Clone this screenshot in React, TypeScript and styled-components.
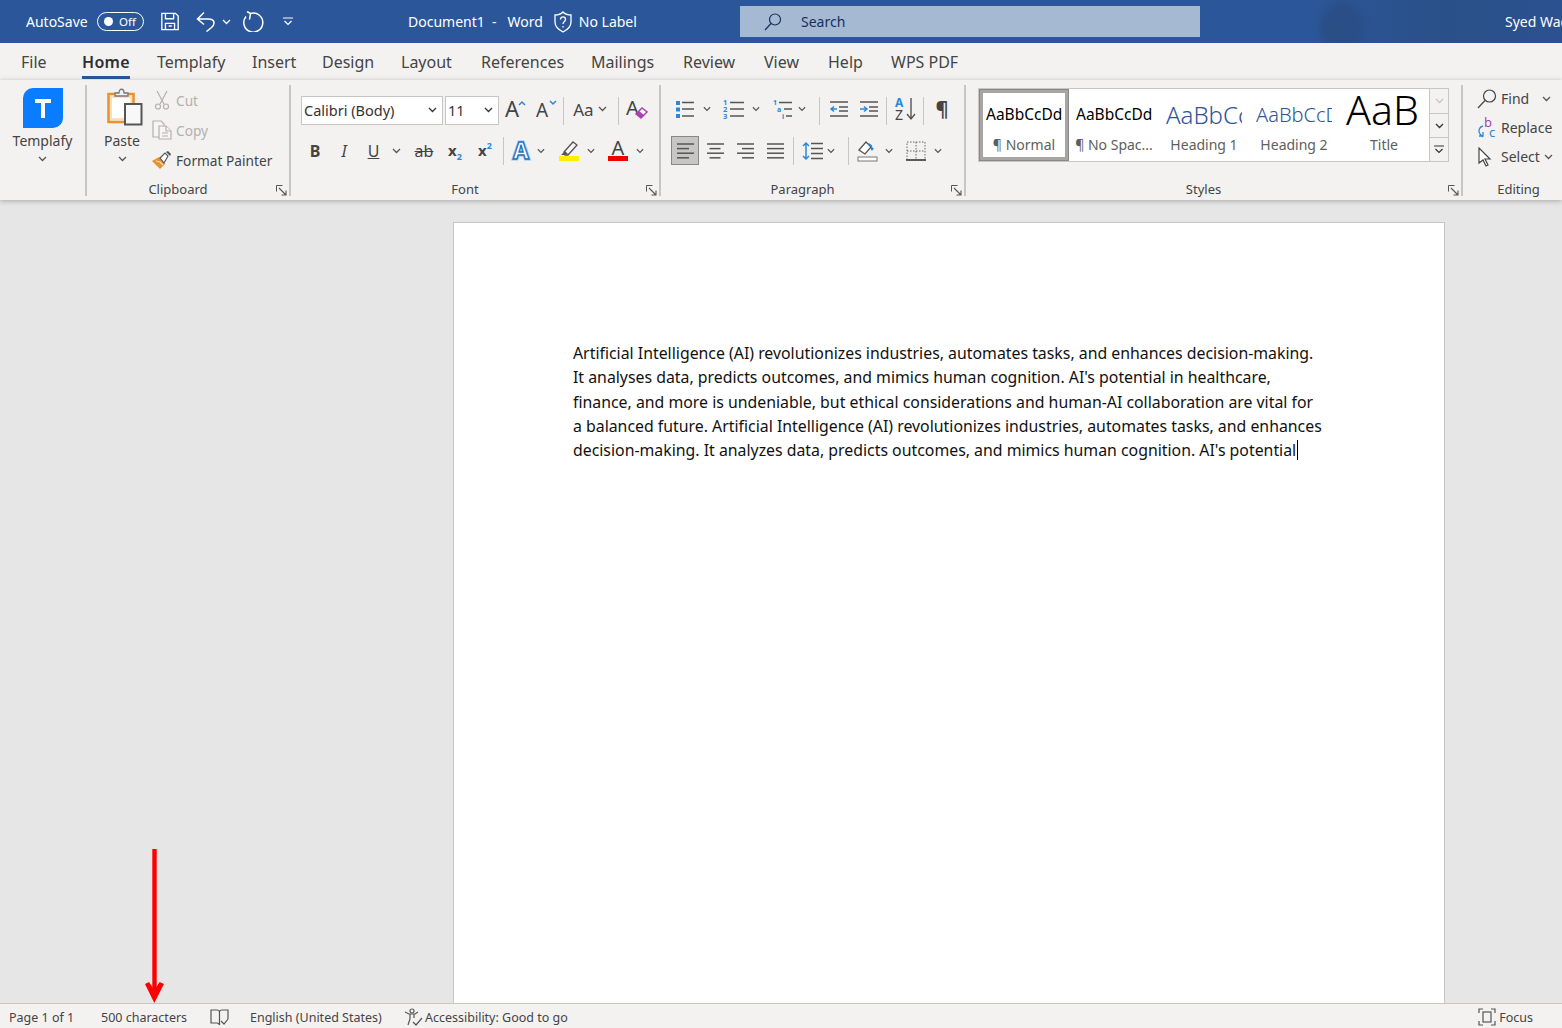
import React from "react";
import styled, { createGlobalStyle } from "styled-components";

const UI = `"Noto Sans", "Open Sans", sans-serif`;

const GlobalStyle = createGlobalStyle`
    html, body {
        margin: 0;
        padding: 0;
        height: 100%;
        overflow: hidden;
    }
    body {
        font-family: ${UI};
        background: #e6e6e6;
    }
`;

const Window = styled.div`
    position: relative;
    width: 1562px;
    height: 1028px;
    display: flex;
    flex-direction: column;
    overflow: hidden;
`;

/* title bar */
const TitleBar = styled.div`
    height: 43px;
    flex: none;
    display: flex;
    align-items: center;
    color: #fff;
    font-size: 14px;
    background: linear-gradient(90deg, #2b579a 0, #2b579a 1300px, #2a5088 1440px, #2b5190 100%);
    overflow: hidden;
    position: relative;
    &::before {
        content: "";
        position: absolute;
        left: 1320px;
        top: 2px;
        width: 44px;
        height: 52px;
        border-radius: 50%;
        background: #2a4f87;
        filter: blur(3px);
    }
`;
const QuickAccess = styled.div`
    width: 408px;
    flex: none;
    display: flex;
    align-items: center;
    padding-left: 26px;
    box-sizing: border-box;
`;
const AutoSave = styled.span`
    width: 71px;
    flex: none;
`;
const Toggle = styled.div`
    width: 47px;
    height: 19px;
    border: 1px solid #fff;
    border-radius: 10px;
    box-sizing: border-box;
    display: flex;
    align-items: center;
    gap: 6px;
    padding-left: 6px;
    font-size: 11.5px;
    flex: none;
    margin-right: 16px;
    &::before {
        content: "";
        width: 9px;
        height: 9px;
        border-radius: 50%;
        background: #fff;
    }
`;
const QuickSlot = styled.div<{ $w: number; $ml?: number }>`
    width: ${(p) => p.$w}px;
    margin-left: ${(p) => p.$ml ?? 0}px;
    flex: none;
    display: flex;
    align-items: center;
    justify-content: center;
`;
const DocTitle = styled.div`
    width: 332px;
    flex: none;
    display: flex;
    align-items: center;
    white-space: pre;
`;
const ShieldSlot = styled.span`
    display: flex;
    margin: 0 6px 0 10px;
`;
const SearchBox = styled.div`
    width: 460px;
    height: 31px;
    flex: none;
    display: flex;
    align-items: center;
    gap: 19px;
    padding-left: 24px;
    box-sizing: border-box;
    background: #a6b9d3;
    color: #16305c;
`;
const UserName = styled.div`
    margin-left: 305px;
    white-space: nowrap;
    flex: none;
`;

/* tabs */
const TabBar = styled.div`
    height: 37px;
    flex: none;
    display: flex;
    background: #f3f2f1;
    padding-left: 21px;
`;
const TabSlot = styled.div<{ $w: number }>`
    width: ${(p) => p.$w}px;
    flex: none;
`;
const Tab = styled.div<{ $active?: boolean }>`
    display: inline-block;
    height: 36px;
    box-sizing: border-box;
    padding-top: 8px;
    font-size: 16px;
    line-height: 22px;
    color: ${(p) => (p.$active ? "#2f2f2f" : "#444")};
    font-weight: ${(p) => (p.$active ? 600 : 400)};
    letter-spacing: ${(p) => (p.$active ? "0.3px" : "0")};
    border-bottom: 3px solid ${(p) => (p.$active ? "#2b579a" : "transparent")};
    white-space: nowrap;
`;

/* ribbon */
const Ribbon = styled.div`
    height: 120px;
    flex: none;
    display: flex;
    background: #f3f2f1;
    box-shadow: 0 1px 5px rgba(0, 0, 0, 0.28);
    position: relative;
    z-index: 2;
`;
const Group = styled.div<{ $w: number; $last?: boolean }>`
    width: ${(p) => p.$w}px;
    flex: none;
    height: 111px;
    margin-top: 5px;
    box-sizing: border-box;
    position: relative;
    display: flex;
    flex-direction: column;
    border-right: ${(p) => (p.$last ? "none" : "2px solid #c8c6c4")};
`;
const GroupBody = styled.div`
    flex: 1;
    min-height: 0;
    display: flex;
`;
const GroupLabel = styled.div<{ $pr?: number; $pl?: number }>`
    height: 14px;
    line-height: 14px;
    text-align: center;
    font-size: 13px;
    color: #444;
    flex: none;
    padding-right: ${(p) => p.$pr ?? 0}px;
    padding-left: ${(p) => p.$pl ?? 0}px;
`;
const Launcher = styled.span`
    position: absolute;
    right: 2px;
    bottom: 0;
    display: flex;
`;
const BigButton = styled.div<{ $w: number }>`
    width: ${(p) => p.$w}px;
    flex: none;
    display: flex;
    flex-direction: column;
    align-items: center;
    font-size: 14px;
    color: #444;
    padding-top: 3px;
    gap: 2px;
`;
const BigLabel = styled.span`
    line-height: 20px;
    margin-top: 1px;
    margin-bottom: 3px;
`;
const ClipboardList = styled.div`
    display: flex;
    flex-direction: column;
    margin-left: -5px;
`;
const SmallAction = styled.div<{ $off?: boolean }>`
    height: 30px;
    display: flex;
    align-items: center;
    gap: 4px;
    font-size: 13.7px;
    color: ${(p) => (p.$off ? "#b3b0ad" : "#444")};
    white-space: nowrap;
`;
const IconSlot = styled.span`
    width: 20px;
    flex: none;
    display: flex;
    justify-content: center;
`;
const Rows = styled.div`
    display: flex;
    flex-direction: column;
    padding: 11px 0 0 10px;
    gap: 11px;
`;
const Tool = styled.div<{ $w: number; $ml?: number; $on?: boolean }>`
    width: ${(p) => p.$w}px;
    margin-left: ${(p) => p.$ml ?? 0}px;
    height: 29px;
    flex: none;
    display: flex;
    align-items: center;
    justify-content: center;
    box-sizing: border-box;
    background: ${(p) => (p.$on ? "#c8c6c4" : "transparent")};
    border: ${(p) => (p.$on ? "1px solid #8a8886" : "none")};
`;
const ToolRow = styled.div<{ $up?: boolean }>`
    display: flex;
    align-items: center;
    height: 29px;
    ${Tool} {
        margin-bottom: ${(p) => (p.$up ? "3px" : "0")};
    }
`;
const Sep = styled.div<{ $l?: number }>`
    width: 1px;
    height: 28px;
    background: #c8c6c4;
    flex: none;
    margin-left: ${(p) => p.$l ?? 0}px;
`;
const Combo = styled.div<{ $w: number; $mr?: number }>`
    width: ${(p) => p.$w}px;
    margin-right: ${(p) => p.$mr ?? 0}px;
    height: 29px;
    box-sizing: border-box;
    flex: none;
    background: #fff;
    border: 1px solid #c8c6c4;
    display: flex;
    align-items: center;
    justify-content: space-between;
    padding: 0 5px 2px 2px;
    font-size: 14.5px;
    color: #333;
`;

/* styles gallery */
const Gallery = styled.div`
    margin: 3px 0 0 12px;
    width: 471px;
    height: 74px;
    box-sizing: border-box;
    background: #fff;
    border: 1px solid #c8c6c4;
    display: flex;
`;
const StyleCard = styled.div<{ $on?: boolean }>`
    width: 90px;
    height: 72px;
    flex: none;
    box-sizing: border-box;
    border: ${(p) => (p.$on ? "4px solid #a8a6a4" : "4px solid transparent")};
    outline: ${(p) => (p.$on ? "1px solid #8a8886" : "none")};
    outline-offset: -1px;
    display: flex;
    flex-direction: column;
    align-items: center;
    overflow: hidden;
`;
const Sample = styled.div<{ $size: number; $color: string; $light?: boolean; $pb?: number }>`
    height: 42px;
    width: 76px;
    box-sizing: border-box;
    padding-bottom: ${(p) => p.$pb ?? 0}px;
    overflow: hidden;
    flex: none;
    white-space: nowrap;
    display: flex;
    align-items: center;
    justify-content: flex-start;
    font-size: ${(p) => p.$size}px;
    font-weight: ${(p) => (p.$light ? 300 : 400)};
    color: ${(p) => p.$color};
`;
const StyleName = styled.div`
    font-size: 14px;
    line-height: 20px;
    color: #605e5c;
    white-space: nowrap;
`;
const GalleryScroll = styled.div`
    margin-left: auto;
    width: 18px;
    flex: none;
    display: flex;
    flex-direction: column;
    border-left: 1px solid #c8c6c4;
`;
const ScrollBtn = styled.div<{ $h: number; $end?: boolean }>`
    height: ${(p) => p.$h}px;
    flex: none;
    display: flex;
    align-items: center;
    justify-content: center;
    border-bottom: ${(p) => (p.$end ? "none" : "1px solid #c8c6c4")};
    box-sizing: border-box;
    background: #f3f2f1;
`;
const EditList = styled.div`
    display: flex;
    flex-direction: column;
    padding-left: 14px;
    margin-top: -1px;
`;
const EditAction = styled.div`
    height: 29px;
    display: flex;
    align-items: center;
    gap: 4px;
    font-size: 14px;
    color: #444;
    white-space: nowrap;
`;
const EditChevron = styled.span<{ $ml: number }>`
    display: flex;
    margin-left: ${(p) => p.$ml}px;
`;

/* document */
const Canvas = styled.div`
    flex: 1;
    min-height: 0;
    background: #e6e6e6;
    padding: 22px 0 0 453px;
    overflow: hidden;
`;
const Page = styled.div`
    width: 992px;
    height: 900px;
    box-sizing: border-box;
    background: #fff;
    border: 1px solid #c6c6c6;
    padding: 118px 118px 0 119px;
`;
const Body = styled.div`
    font-size: 15.85px;
    line-height: 24.25px;
    color: #111;
    white-space: pre;
`;
const Caret = styled.span`
    display: inline-block;
    width: 1px;
    height: 20px;
    background: #000;
    vertical-align: -4px;
    margin-left: 1px;
`;

/* status bar */
const StatusBar = styled.div`
    height: 25px;
    flex: none;
    box-sizing: border-box;
    background: #f3f2f1;
    border-top: 1px solid #c8c6c4;
    display: flex;
    align-items: center;
    padding: 2px 0 0 9px;
    font-size: 12.5px;
    color: #444;
    position: relative;
    z-index: 3;
`;
const StatusItem = styled.span<{ $w: number }>`
    width: ${(p) => p.$w}px;
    flex: none;
    white-space: nowrap;
    display: flex;
    align-items: center;
`;
const FocusItem = styled.span`
    margin-left: auto;
    margin-right: 29px;
    display: flex;
    align-items: center;
    gap: 3px;
`;
const RedArrow = styled.svg`
    position: absolute;
    left: 140px;
    top: 846px;
    z-index: 4;
`;

const GREY = "#444";
const BLUE = "#2b88d8";

const Chevron = ({ color = "#555" }: { color?: string }) => (
    <svg width="9" height="6" viewBox="0 0 9 6">
        <path d="M1 1l3.5 3.5L8 1" fill="none" stroke={color} strokeWidth="1.3" />
    </svg>
);

const DialogIcon = () => (
    <svg width="11" height="11" viewBox="0 0 11 11" fill="none" stroke="#555">
        <path d="M.5 6.500v-6h6" />
        <path d="M3 3l7 7M10 5.500V10H5.500" strokeWidth="1.100" />
    </svg>
);

const SaveIcon = () => (
    <svg width="21" height="21" viewBox="0 0 22 22" fill="none" stroke="#fff" strokeWidth="1.500">
        <path d="M2 2h15l3 3v15H2z" />
        <path d="M6 2v6h9V2M6 20v-7h10v7M9.500 16H13" />
    </svg>
);
const UndoIcon = () => (
    <svg width="20" height="21" viewBox="0 0 20 21" fill="none" stroke="#fff" strokeWidth="1.500">
        <path d="M8 1.500L1.500 8 8 13.500M1.500 8h11c7 0 6.500 5.500 3 8.500l-5 4" />
    </svg>
);
const RedoIcon = () => (
    <svg width="21" height="21" viewBox="0 0 21 21" fill="none" stroke="#fff" strokeWidth="1.500">
        <path d="M7.500 2.500a9.500 9.500 0 1 1-4.500 3M4 .500l3.500 2-1 6" />
    </svg>
);
const CustomizeIcon = ({ color = "#fff" }: { color?: string }) => (
    <svg width="10" height="9" viewBox="0 0 10 9" fill="none" stroke={color} strokeWidth="1.200">
        <path d="M0 1h10M1.500 4l3.500 3.500L8.500 4" />
    </svg>
);
const ShieldIcon = () => (
    <svg width="20" height="22" viewBox="0 0 20 22" fill="none" stroke="#fff" strokeWidth="1.300">
        <path d="M10 1c2 2 5 3 8 3v7c0 5-4 8-8 10-4-2-8-5-8-10V4c3 0 6-1 8-3z" />
        <path d="M7.500 8.500c0-3.500 5-3.500 5 0 0 2-2.500 2-2.500 4.500M10 15v1.500" />
    </svg>
);
const SearchIcon = () => (
    <svg width="18" height="18" viewBox="0 0 18 18" fill="none" stroke="#16305c" strokeWidth="1.200">
        <circle cx="11" cy="6.500" r="5.500" />
        <path d="M7 10.500L1 17" />
    </svg>
);

const TemplafyLogo = () => (
    <svg width="40" height="40" viewBox="0 0 40 40">
        <path d="M10 0h30v30a10 10 0 0 1-10 10H0V10A10 10 0 0 1 10 0z" fill="#0a7cff" />
        <path d="M12 11h16v4h-6v15h-4V15h-6z" fill="#fff" />
    </svg>
);
const PasteIcon = () => (
    <svg width="42" height="40" viewBox="-6 0 42 40">
        <rect x="1.500" y="6" width="25" height="28" fill="#fbeed9" stroke="#e8912d" strokeWidth="2.500" />
        <rect x="4" y="9" width="20" height="22" fill="#fff" stroke="#f8d9a8" strokeWidth="1.500" />
        <path d="M8 8V5h4c0-5 5-5 5 0h4v3z" fill="#f3f2f1" stroke="#777" strokeWidth="1.300" />
        <rect x="18" y="16" width="16.500" height="20.500" fill="#f8f8f8" stroke="#555" strokeWidth="2" />
    </svg>
);
const CutIcon = () => (
    <svg width="16" height="20" viewBox="0 0 16 20" fill="none" stroke="#b3b0ad" strokeWidth="1.200">
        <path d="M3 1l7 13M13 1L6 14" />
        <circle cx="4" cy="16.500" r="2.500" />
        <circle cx="12" cy="16.500" r="2.500" />
    </svg>
);
const CopyIcon = () => (
    <svg width="20" height="20" viewBox="0 0 20 20" fill="#f6f5f4" stroke="#b3b0ad" strokeWidth="1.200">
        <path d="M1 1h8l3 3v13H1z" />
        <path d="M7 6h7l5 5v8H7z" />
        <path d="M14 6v5h5M10 13h6M10 16h6" />
    </svg>
);
const PainterIcon = () => (
    <svg width="20" height="20" viewBox="0 0 20 20">
        <path d="M0 11l7-4 6 7-5 5z" fill="#e8912d" />
        <path d="M4 11l4 1 3 3" fill="none" stroke="#fbe3c2" strokeWidth="1.200" />
        <path d="M8 8l5-5 3 3-4 7z" fill="#fff" stroke="#555" strokeWidth="1.100" />
        <path d="M14 2l2-1 3 3-1 2z" fill="#555" />
    </svg>
);

const GrowFont = ({ down }: { down?: boolean }) => (
    <svg width="22" height="22" viewBox="0 0 22 22">
        <text x="0" y="19" fontFamily={UI} fontSize={down ? 19 : 22} fill={GREY}>A</text>
        <path d={down ? "M14 3l3 3 3-3" : "M14 7l3-3 3 3"} fill="none" stroke={BLUE} strokeWidth="1.500" />
    </svg>
);
const ClearIcon = () => (
    <svg width="22" height="22" viewBox="0 0 22 22">
        <text x="0" y="17" fontFamily={UI} fontSize="20" fill={GREY}>A</text>
        <path d="M10 16l6-6 5 4-6 6z" fill="#fff" stroke="#a742b0" strokeWidth="1.500" />
        <path d="M10 16l3-3 5 4-3 3z" fill="#a742b0" />
    </svg>
);
const Letter = styled.span<{ $size: number; $bold?: boolean; $italic?: boolean; $under?: boolean; $strike?: boolean }>`
    font-size: ${(p) => p.$size}px;
    font-weight: ${(p) => (p.$bold ? 700 : 400)};
    font-style: ${(p) => (p.$italic ? "italic" : "normal")};
    text-decoration: ${(p) => (p.$under ? "underline" : p.$strike ? "line-through" : "none")};
    color: ${GREY};
    line-height: 1;
`;
const Script = styled.sup<{ $low?: boolean }>`
    font-size: 9px;
    font-weight: 700;
    color: ${BLUE};
    vertical-align: ${(p) => (p.$low ? "-4px" : "7px")};
    line-height: 0;
`;
const EffectIcon = () => (
    <svg width="22" height="22" viewBox="0 0 22 22">
        <text x="11" y="19" textAnchor="middle" fontFamily={UI} fontWeight="700" fontSize="23" fill="#fff" stroke="#9ccbf0" strokeWidth="3">A</text>
        <text x="11" y="19" textAnchor="middle" fontFamily={UI} fontWeight="700" fontSize="23" fill="#fff" stroke="#1f6fc0" strokeWidth="1.300">A</text>
    </svg>
);
const HighlightIcon = () => (
    <svg width="20" height="22" viewBox="0 0 20 22">
        <path d="M5 12L14 2l4 3-9 10H6z" fill="#f6f5f4" stroke="#555" strokeWidth="1.300" />
        <path d="M2 15l4-4 3 3-2 1z" fill="#555" />
        <rect x="0" y="16" width="20" height="5" fill="#ffee00" />
    </svg>
);
const ColorIcon = () => (
    <svg width="20" height="22" viewBox="0 0 20 22">
        <text x="10" y="15" textAnchor="middle" fontFamily={UI} fontSize="20" fill={GREY}>A</text>
        <rect x="0" y="16" width="20" height="5" fill="#f00000" />
    </svg>
);
const Lines = ({ kind }: { kind: "left" | "center" | "right" | "justify" }) => {
    const rows: [number, number][] =
        kind === "left" ? [[1, 18], [1, 13], [1, 18], [1, 13]]
            : kind === "center" ? [[1, 18], [3.500, 14.500], [1, 18], [3.500, 14.500]]
                : kind === "right" ? [[1, 18], [6, 18], [1, 18], [6, 18]]
                    : [[1, 18], [1, 18], [1, 18], [1, 18]];
    return (
        <svg width="19" height="18" viewBox="0 0 19 18" stroke="#555" strokeWidth="1.500">
            {rows.map(([a, b], i) => (
                <path key={i} d={`M${a} ${2 + i * 4.600}H${b}`} />
            ))}
        </svg>
    );
};
const BulletsIcon = () => (
    <svg width="20" height="20" viewBox="0 0 20 20">
        <path d="M1 2h4v4H1zM1 8.500h4v4H1zM1 15h4v4H1z" fill={BLUE} />
        <path d="M7 3.500h12M7 10h12M7 17h12" stroke="#555" strokeWidth="1.500" />
    </svg>
);
const NumberingIcon = () => (
    <svg width="22" height="20" viewBox="0 0 22 20">
        <text fontFamily={UI} fontWeight="700" fontSize="7.500" fill={BLUE}>
            <tspan x="0" y="6">1</tspan>
            <tspan x="0" y="13">2</tspan>
            <tspan x="0" y="20">3</tspan>
        </text>
        <path d="M7 3.500h14M7 10h14M7 17h14" stroke="#555" strokeWidth="1.500" />
    </svg>
);
const MultilevelIcon = () => (
    <svg width="20" height="20" viewBox="0 0 20 20">
        <text fontFamily={UI} fontWeight="700" fontSize="7" fill={BLUE}>
            <tspan x="0" y="6">1</tspan>
            <tspan x="4" y="13">a</tspan>
            <tspan x="9" y="20">i</tspan>
        </text>
        <path d="M6 3.500h13M11 10h8M13 17h6" stroke="#555" strokeWidth="1.500" />
    </svg>
);
const IndentIcon = ({ grow }: { grow?: boolean }) => (
    <svg width="19" height="18" viewBox="0 0 19 18">
        <path d="M1 2h18M10 7h9M10 11h9M1 16h18" stroke="#555" strokeWidth="1.500" />
        <path d={grow ? "M1 9h6M5 6.500L8 9l-3 2.500" : "M8 9H2M5 6.500L2 9l3 2.500"} fill="none" stroke={BLUE} strokeWidth="1.500" />
    </svg>
);
const SortIcon = () => (
    <svg width="22" height="26" viewBox="0 0 22 26">
        <text x="0" y="11" fontFamily={UI} fontWeight="700" fontSize="12" fill={BLUE}>A</text>
        <text x="0" y="24" fontFamily={UI} fontSize="14" fill={GREY}>Z</text>
        <path d="M16 2v21M12 18l4 5 4-5" fill="none" stroke="#555" strokeWidth="1.400" />
    </svg>
);
const LineSpacingIcon = () => (
    <svg width="21" height="20" viewBox="0 0 21 20">
        <path d="M4 2v16M1 5l3-3 3 3M1 15l3 3 3-3" fill="none" stroke={BLUE} strokeWidth="1.500" />
        <path d="M9 2.500h12M9 7.500h12M9 12.500h12M9 17.500h12" stroke="#555" strokeWidth="1.500" />
    </svg>
);
const ShadingIcon = () => (
    <svg width="21" height="22" viewBox="0 0 21 22">
        <path d="M2 10l7-8 5 5-6 7z" fill="#fff" stroke="#555" strokeWidth="1.300" />
        <path d="M15 10c0-5-2-6-4-6" fill="none" stroke={BLUE} strokeWidth="1.500" />
        <path d="M13 8l2 3 2-3" fill={BLUE} />
        <rect x="1" y="17" width="19" height="4" fill="#fff" stroke="#777" />
    </svg>
);
const BordersIcon = () => (
    <svg width="20" height="20" viewBox="0 0 20 20" fill="none" stroke="#666" strokeDasharray="1.500 1.500">
        <path d="M1 1h18v18H1zM10 1v18M1 10h18" />
        <path d="M0 19h20" stroke="#333" strokeWidth="1.500" strokeDasharray="none" />
    </svg>
);
const FindIcon = () => (
    <svg width="20" height="20" viewBox="0 0 20 20" fill="none" stroke="#444" strokeWidth="1.200">
        <circle cx="12.500" cy="7" r="6" />
        <path d="M8 11.500L1 19" />
    </svg>
);
const ReplaceIcon = () => (
    <svg width="20" height="22" viewBox="0 0 20 22">
        <text x="7" y="10" fontFamily={UI} fontSize="13" fill="#a742b0">b</text>
        <text x="12" y="20" fontFamily={UI} fontSize="13" fill={BLUE}>c</text>
        <path d="M6 9c-4 1-5 5-3 8l3 3M2 19h4v-4" fill="none" stroke={BLUE} strokeWidth="1.300" />
    </svg>
);
const SelectIcon = () => (
    <svg width="20" height="20" viewBox="0 0 20 20">
        <path d="M2 1v15l4-3 3 6 2-1-3-6h5z" fill="#fff" stroke="#444" strokeWidth="1.200" />
    </svg>
);
const ReadIcon = () => (
    <svg width="19" height="17" viewBox="0 0 19 17" fill="none" stroke="#555" strokeWidth="1.200">
        <path d="M1 1h6c1.500 0 2.500 1 2.500 2v13C9 15 8 14 7 14H1zM9.500 3c0-1 1-2 2.500-2h6v9" />
        <path d="M11 12l3 3 4-5" />
    </svg>
);
const AccessIcon = () => (
    <svg width="21" height="19" viewBox="0 0 21 19" fill="none" stroke="#555" strokeWidth="1.200">
        <circle cx="8" cy="3" r="2" />
        <path d="M1 4l4 2h6l3-2M6 6v5l-2 6M10 6v4" />
        <path d="M9 14l3 3 6-7" />
    </svg>
);
const FocusIcon = () => (
    <svg width="18" height="18" viewBox="0 0 18 18" fill="none" stroke="#555" strokeWidth="1.200">
        <path d="M1 5V1h4M13 1h4v4M17 13v4h-4M5 17H1v-4" />
        <rect x="5" y="4" width="8" height="10" />
    </svg>
);

const TABS: [string, number][] = [
    ["File", 61],
    ["Home", 75],
    ["Templafy", 95],
    ["Insert", 70],
    ["Design", 79],
    ["Layout", 80],
    ["References", 110],
    ["Mailings", 92],
    ["Review", 81],
    ["View", 64],
    ["Help", 63],
    ["WPS PDF", 80],
];

const DOCUMENT = [
    "Artificial Intelligence (AI) revolutionizes industries, automates tasks, and enhances decision-making.",
    "It analyses data, predicts outcomes, and mimics human cognition. AI's potential in healthcare,",
    "finance, and more is undeniable, but ethical considerations and human-AI collaboration are vital for",
    "a balanced future. Artificial Intelligence (AI) revolutionizes industries, automates tasks, and enhances",
    "decision-making. It analyzes data, predicts outcomes, and mimics human cognition. AI's potential",
];

function FontGroup() {
    return (
        <Group $w={370}>
            <GroupBody>
                <Rows>
                    <ToolRow $up>
                        <Combo $w={142} $mr={2}>Calibri (Body)<Chevron color="#333" /></Combo>
                        <Combo $w={54}>11<Chevron color="#333" /></Combo>
                        <Tool $w={33}><GrowFont /></Tool>
                        <Tool $w={29}><GrowFont down /></Tool>
                        <Sep $l={2} />
                        <Tool $w={52}><Letter $size={17}>Aa</Letter>&nbsp;<Chevron /></Tool>
                        <Sep $l={2} />
                        <Tool $w={36}><ClearIcon /></Tool>
                    </ToolRow>
                    <ToolRow>
                        <Tool $w={28}><Letter $size={16} $bold>B</Letter></Tool>
                        <Tool $w={30}><Letter $size={16} $italic>I</Letter></Tool>
                        <Tool $w={29}><Letter $size={16} $under>U</Letter></Tool>
                        <Tool $w={17}><Chevron /></Tool>
                        <Tool $w={38}><Letter $size={16} $strike>ab</Letter></Tool>
                        <Tool $w={24}><Letter $size={15} $bold>x<Script $low>2</Script></Letter></Tool>
                        <Tool $w={36}><Letter $size={15} $bold>x<Script>2</Script></Letter></Tool>
                        <Sep />
                        <Tool $w={33}><EffectIcon /></Tool>
                        <Tool $w={8}><Chevron /></Tool>
                        <Tool $w={20} $ml={14}><HighlightIcon /></Tool>
                        <Tool $w={8} $ml={8}><Chevron /></Tool>
                        <Tool $w={20} $ml={13}><ColorIcon /></Tool>
                        <Tool $w={8} $ml={8}><Chevron /></Tool>
                    </ToolRow>
                </Rows>
            </GroupBody>
            <GroupLabel $pr={20}>Font</GroupLabel>
            <Launcher><DialogIcon /></Launcher>
        </Group>
    );
}

function ParagraphGroup() {
    return (
        <Group $w={305}>
            <GroupBody>
                <Rows>
                    <ToolRow $up>
                        <Tool $w={20} $ml={4}><BulletsIcon /></Tool>
                        <Tool $w={8} $ml={8}><Chevron /></Tool>
                        <Tool $w={22} $ml={12}><NumberingIcon /></Tool>
                        <Tool $w={8} $ml={7}><Chevron /></Tool>
                        <Tool $w={20} $ml={13}><MultilevelIcon /></Tool>
                        <Tool $w={8} $ml={5}><Chevron /></Tool>
                        <Sep $l={13} />
                        <Tool $w={19} $ml={9}><IndentIcon /></Tool>
                        <Tool $w={19} $ml={11}><IndentIcon grow /></Tool>
                        <Sep $l={8} />
                        <Tool $w={22} $ml={8}><SortIcon /></Tool>
                        <Sep $l={6} />
                        <Tool $w={24} $ml={6}><Letter $size={20} $bold>¶</Letter></Tool>
                    </ToolRow>
                    <ToolRow>
                        <Tool $w={28} $on><Lines kind="left" /></Tool>
                        <Tool $w={19} $ml={7}><Lines kind="center" /></Tool>
                        <Tool $w={19} $ml={11}><Lines kind="right" /></Tool>
                        <Tool $w={19} $ml={11}><Lines kind="justify" /></Tool>
                        <Sep $l={8} />
                        <Tool $w={21} $ml={8}><LineSpacingIcon /></Tool>
                        <Tool $w={8} $ml={4}><Chevron /></Tool>
                        <Sep $l={13} />
                        <Tool $w={21} $ml={8}><ShadingIcon /></Tool>
                        <Tool $w={8} $ml={7}><Chevron /></Tool>
                        <Tool $w={20} $ml={13}><BordersIcon /></Tool>
                        <Tool $w={8} $ml={8}><Chevron /></Tool>
                    </ToolRow>
                </Rows>
            </GroupBody>
            <GroupLabel $pr={20}>Paragraph</GroupLabel>
            <Launcher><DialogIcon /></Launcher>
        </Group>
    );
}

function StylesGroup() {
    return (
        <Group $w={497}>
            <GroupBody>
                <Gallery>
                    <StyleCard $on>
                        <Sample $size={15.500} $color="#000">AaBbCcDd</Sample>
                        <StyleName>¶ Normal</StyleName>
                    </StyleCard>
                    <StyleCard>
                        <Sample $size={15.500} $color="#000">AaBbCcDd</Sample>
                        <StyleName>¶ No Spac...</StyleName>
                    </StyleCard>
                    <StyleCard>
                        <Sample $size={24} $color="#2f5496" $light>AaBbCc</Sample>
                        <StyleName>Heading 1</StyleName>
                    </StyleCard>
                    <StyleCard>
                        <Sample $size={20} $color="#2f5496" $light>AaBbCcD</Sample>
                        <StyleName>Heading 2</StyleName>
                    </StyleCard>
                    <StyleCard>
                        <Sample $size={41} $color="#000" $light $pb={10}>AaB</Sample>
                        <StyleName>Title</StyleName>
                    </StyleCard>
                    <GalleryScroll>
                        <ScrollBtn $h={25}><Chevron color="#c8c6c4" /></ScrollBtn>
                        <ScrollBtn $h={24}><Chevron color="#333" /></ScrollBtn>
                        <ScrollBtn $h={23} $end><CustomizeIcon color="#333" /></ScrollBtn>
                    </GalleryScroll>
                </Gallery>
            </GroupBody>
            <GroupLabel $pr={20}>Styles</GroupLabel>
            <Launcher><DialogIcon /></Launcher>
        </Group>
    );
}

export default function App() {
    return (
        <Window>
            <GlobalStyle />
            <TitleBar>
                <QuickAccess>
                    <AutoSave>AutoSave</AutoSave>
                    <Toggle>Off</Toggle>
                    <QuickSlot $w={20}><SaveIcon /></QuickSlot>
                    <QuickSlot $w={20} $ml={16}><UndoIcon /></QuickSlot>
                    <QuickSlot $w={9} $ml={6}><Chevron color="#fff" /></QuickSlot>
                    <QuickSlot $w={21} $ml={12}><RedoIcon /></QuickSlot>
                    <QuickSlot $w={10} $ml={19}><CustomizeIcon /></QuickSlot>
                </QuickAccess>
                <DocTitle>
                    Document1  -   Word
                    <ShieldSlot><ShieldIcon /></ShieldSlot>
                    No Label
                </DocTitle>
                <SearchBox><SearchIcon />Search</SearchBox>
                <UserName>Syed Waqas</UserName>
            </TitleBar>
            <TabBar>
                {TABS.map(([name, width]) => (
                    <TabSlot key={name} $w={width}>
                        <Tab $active={name === "Home"}>{name}</Tab>
                    </TabSlot>
                ))}
            </TabBar>
            <Ribbon>
                <Group $w={87}>
                    <GroupBody>
                        <BigButton $w={85}>
                            <TemplafyLogo />
                            <BigLabel>Templafy</BigLabel>
                            <Chevron />
                        </BigButton>
                    </GroupBody>
                </Group>
                <Group $w={204}>
                    <GroupBody>
                        <BigButton $w={70}>
                            <PasteIcon />
                            <BigLabel>Paste</BigLabel>
                            <Chevron />
                        </BigButton>
                        <ClipboardList>
                            <SmallAction $off><IconSlot><CutIcon /></IconSlot>Cut</SmallAction>
                            <SmallAction $off><IconSlot><CopyIcon /></IconSlot>Copy</SmallAction>
                            <SmallAction><IconSlot><PainterIcon /></IconSlot>Format Painter</SmallAction>
                        </ClipboardList>
                    </GroupBody>
                    <GroupLabel $pr={20}>Clipboard</GroupLabel>
                    <Launcher><DialogIcon /></Launcher>
                </Group>
                <FontGroup />
                <ParagraphGroup />
                <StylesGroup />
                <Group $w={99} $last>
                    <GroupBody>
                        <EditList>
                            <EditAction><FindIcon />Find<EditChevron $ml={9}><Chevron /></EditChevron></EditAction>
                            <EditAction><ReplaceIcon />Replace</EditAction>
                            <EditAction><SelectIcon />Select<EditChevron $ml={0}><Chevron /></EditChevron></EditAction>
                        </EditList>
                    </GroupBody>
                    <GroupLabel $pl={12}>Editing</GroupLabel>
                </Group>
            </Ribbon>
            <Canvas>
                <Page>
                    <Body>
                        {DOCUMENT.join("\n")}
                        <Caret />
                    </Body>
                </Page>
            </Canvas>
            <StatusBar>
                <StatusItem $w={92}>Page 1 of 1</StatusItem>
                <StatusItem $w={109}>500 characters</StatusItem>
                <StatusItem $w={40}><ReadIcon /></StatusItem>
                <StatusItem $w={154}>English (United States)</StatusItem>
                <StatusItem $w={180}><AccessIcon />Accessibility: Good to go</StatusItem>
                <FocusItem><FocusIcon />Focus</FocusItem>
            </StatusBar>
            <RedArrow width="28" height="160" viewBox="0 0 28 160">
                <path d="M12.300 3h4.400v147h-4.400z" fill="#ff0000" />
                <path d="M5 138l4-2 5.300 8 5.300-8 4.400 2-9.700 19z" fill="#ff0000" />
            </RedArrow>
        </Window>
    );
}
